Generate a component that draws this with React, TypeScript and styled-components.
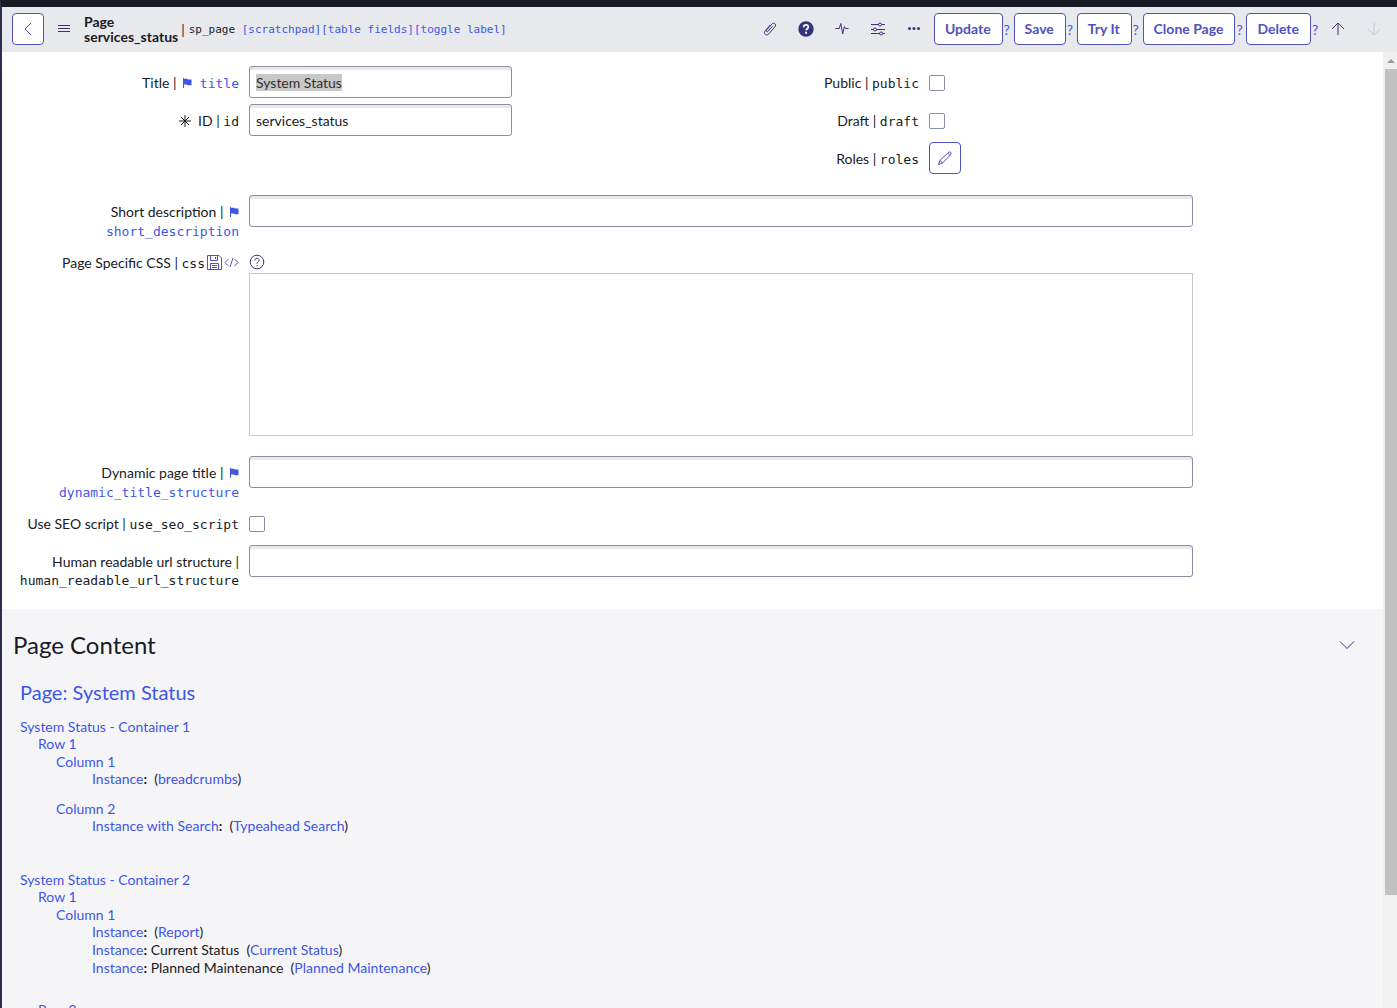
import React, { useEffect, useRef } from "react";
import styled, { createGlobalStyle, css } from "styled-components";

const color = {
  text: "#181a1f",
  link: "#3d56e8",
  action: "#4f52bd",
  icon: "#33357c",
  border: "#8b8fa3",
};

const Global = createGlobalStyle`
  *, *::before, *::after { box-sizing: border-box; }
  body {
    margin: 0;
    overflow: hidden;
    background: #fff;
    color: ${color.text};
    font: 14px/19px Lato, "Open Sans", sans-serif;
  }
  button, input, textarea { font: inherit; color: inherit; }
  a { color: ${color.link}; text-decoration: none; }
`;

const mono = css`
  font-family: "DejaVu Sans Mono", "Liberation Mono", monospace;
`;

const Shell = styled.div`
  display: flex;
  flex-direction: column;
  height: 100vh;
  border-top: 7px solid #1a1926;
  border-left: 2px solid #2f2d4c;
`;

const Header = styled.header`
  display: flex;
  flex: none;
  align-items: center;
  justify-content: space-between;
  height: 45px;
  padding: 0 3px 1px 10px;
  background: #e8e9ed;
`;

const HeaderGroup = styled.div`
  display: flex;
  align-items: center;
  white-space: nowrap;
`;

const HeaderTools = styled(HeaderGroup)`
  margin-right: 2px;
`;

const SquareButton = styled.button`
  display: grid;
  place-items: center;
  width: 32px;
  height: 32px;
  padding: 0;
  border: 1px solid ${color.action};
  border-radius: 4px;
  background: #fff;
  color: ${color.action};
`;

const IconButton = styled.button<{ $width?: number }>`
  display: grid;
  place-items: center;
  width: ${(p) => p.$width ?? 36}px;
  height: 32px;
  padding: 0;
  border: 0;
  background: none;
  color: ${color.icon};
  &:disabled { color: #c6c7da; }
`;

const Title = styled.h1`
  margin: 0;
  font-size: 14px;
  line-height: 15px;
  font-weight: 700;
`;

const HeaderMeta = styled.div`
  display: flex;
  align-items: center;
  gap: 4px;
  margin-left: 3px;
`;

const HeaderCode = styled.span`
  ${mono}
  font-size: 11px;
  white-space: pre;
`;

const ActionButton = styled.button`
  height: 32px;
  padding: 0 11px 1px 10px;
  border: 1px solid ${color.action};
  border-radius: 4px;
  background: #fff;
  color: ${color.action};
  font-weight: 700;
`;

const HelpLink = styled.a`
  width: 11px;
  padding-left: 1px;
`;

const Body = styled.div`
  display: flex;
  flex: 1;
  min-height: 0;
`;

const Main = styled.main`
  flex: 1;
  min-width: 0;
  overflow: hidden;
`;

const Scrollbar = styled.div`
  display: grid;
  flex: none;
  grid-template-rows: 17px 88fr 12fr;
  width: 14px;
  padding-left: 2px;
  background: #f0f0f1;
`;

const ScrollArrow = styled.div`
  display: grid;
  place-items: center;
`;

const ScrollThumb = styled.div`
  background: #c1c1c1;
`;

const Form = styled.form`
  padding: 14px 21px 20px 0;
`;

const Columns = styled.div`
  display: grid;
  grid-template-columns: 1fr 1fr;
`;

const Column = styled.div`
  display: flex;
  flex-direction: column;
  gap: 6px;
`;

const Field = styled.div<{ $top?: number; $wide?: boolean }>`
  display: grid;
  grid-template-columns: 237px 1fr;
  column-gap: 10px;
  align-items: start;
  margin-top: ${(p) => p.$top ?? 0}px;
  padding-right: ${(p) => (p.$wide ? "169px" : "0")};
`;

const Label = styled.label<{ $flush?: boolean; $tight?: boolean }>`
  padding-top: ${(p) => (p.$flush ? 0 : p.$tight ? 8 : 7)}px;
  line-height: ${(p) => (p.$tight ? 18 : 19)}px;
  text-align: right;
`;

const Code = styled.span`
  ${mono}
  font-size: 13px;
  line-height: 1;
`;

const CodeLink = styled.a`
  ${mono}
  font-size: 13px;
  line-height: 1;
`;

const TextBox = styled.input<{ $short?: boolean }>`
  width: ${(p) => (p.$short ? "263px" : "100%")};
  height: 32px;
  padding: 0 6px;
  border: 1px solid ${color.border};
  border-radius: 3px;
  outline: 0;
  background: #fff;
  box-shadow: inset 0 3px 0 #e6e8ea;
  &::selection { background: #c8c8c8; color: #2e2e2e; }
`;

const CheckCell = styled.div`
  display: flex;
  align-items: center;
  height: 32px;
  padding-top: 2px;
`;

const CheckBox = styled.input`
  appearance: none;
  width: 16px;
  height: 16px;
  margin: 0;
  border: 1px solid ${color.border};
  border-radius: 2px;
  background: #fff;
  &:checked { background: ${color.action}; }
`;

const InlineButton = styled.button`
  display: inline-block;
  height: 16px;
  margin: 0 0 0 2px;
  padding: 0;
  border: 0;
  background: none;
  color: ${color.action};
  line-height: 0;
  vertical-align: -2px;
`;

const EditorCell = styled.div`
  display: flex;
  flex-direction: column;
  align-items: stretch;
`;

const EditorTools = styled.div`
  display: flex;
  height: 20px;
  padding-top: 1px;
`;

const HintButton = styled.button`
  width: 16px;
  height: 16px;
  padding: 0;
  border: 0;
  background: none;
  color: ${color.icon};
  line-height: 0;
`;

const Editor = styled.textarea`
  display: block;
  width: 100%;
  height: 163px;
  border: 1px solid #c6c7cb;
  border-radius: 0;
  resize: none;
`;

const FlagIcon = styled.svg`
  margin: 0 0 0 2px;
`;

const MandatoryIcon = styled.svg`
  margin-right: 3px;
  vertical-align: -2px;
`;

const Section = styled.section`
  min-height: 100%;
  padding: 20px 20px 0 11px;
  background: #f5f5f8;
`;

const SectionHeader = styled.div`
  display: flex;
  align-items: center;
  justify-content: space-between;
`;

const SectionTitle = styled.h2`
  margin: 0;
  font-size: 24px;
  line-height: 30px;
  font-weight: 400;
`;

const Tree = styled.div`
  padding: 19px 0 0 7px;
`;

const TreeTitle = styled.h3`
  margin: 0 0 14px;
  font-size: 20px;
  line-height: 24px;
  font-weight: 400;
`;

const TreeList = styled.ul<{ $indent?: number }>`
  margin: 0;
  padding: 0 0 0 ${(p) => p.$indent ?? 0}px;
  list-style: none;
`;

const Branch = styled.li<{ $line: number }>`
  padding-bottom: 12px;
  line-height: ${(p) => p.$line}px;
`;

const Leaf = styled.li`
  line-height: 18px;
`;

type Instance = { link: string; name?: string; widget: string };
type TreeColumn = { name: string; items: Instance[] };
type TreeRow = { name: string; columns: TreeColumn[] };
type Container = { name: string; rows: TreeRow[] };

const containers: Container[] = [
  {
    name: "System Status - Container 1",
    rows: [
      {
        name: "Row 1",
        columns: [
          { name: "Column 1", items: [{ link: "Instance", widget: "breadcrumbs" }] },
          { name: "Column 2", items: [{ link: "Instance with Search", widget: "Typeahead Search" }] },
        ],
      },
    ],
  },
  {
    name: "System Status - Container 2",
    rows: [
      {
        name: "Row 1",
        columns: [
          {
            name: "Column 1",
            items: [
              { link: "Instance", widget: "Report" },
              { link: "Instance", name: "Current Status", widget: "Current Status" },
              { link: "Instance", name: "Planned Maintenance", widget: "Planned Maintenance" },
            ],
          },
        ],
      },
      { name: "Row 2", columns: [] },
    ],
  },
];

const actions = ["Update", "Save", "Try It", "Clone Page", "Delete"];

const stroke = { fill: "none", stroke: "currentColor", strokeWidth: 1 };

const Flag = () => (
  <FlagIcon width="10" height="10" viewBox="0 0 10 10" fill={color.link} aria-hidden="true">
    <path d="M1 0h1v.8h3l1 .7h3.500v5.700H6l-1-.7H2V10H1z" />
  </FlagIcon>
);

const Mandatory = () => (
  <MandatoryIcon width="14" height="14" viewBox="0 0 14 14" {...stroke} aria-hidden="true">
    <path d="M7 1v12M1 7h12M3 3l8 8M11 3l-8 8" />
  </MandatoryIcon>
);

const Paperclip = () => (
  <svg width="16" height="16" viewBox="0 0 16 16" {...stroke}>
    <path d="M10.500 5.200l-4.600 5.300c-.9 1-2.300-.2-1.500-1.200l5.500-6.300c1.900-2.100 5 .4 3.100 2.700l-6.200 7.200c-2.400 2.700-5.900-.4-3.700-3l5-5.800" />
  </svg>
);

const HelpSolid = () => (
  <svg width="16" height="16" viewBox="0 0 16 16">
    <circle cx="8" cy="8" r="7.700" fill="currentColor" />
    <path d="M5.700 6.200c0-3 4.700-3 4.700-.2 0 1.700-2.300 1.700-2.300 3.300" fill="none" stroke="#fff" strokeWidth="1.800" />
    <rect x="7.100" y="10.700" width="2" height="2" fill="#fff" />
  </svg>
);

const Pulse = () => (
  <svg width="16" height="16" viewBox="0 0 16 16" {...stroke}>
    <path d="M1.500 7.500h3.700L6.800 2.500l1.900 10.500 1.700-7.500 1 2h3.100" />
  </svg>
);

const Sliders = () => (
  <svg width="16" height="16" viewBox="0 0 16 16" {...stroke}>
    <path d="M1 3.500h7.500M11.500 3.500H15M1 8.500h2.500M6.500 8.500H15M1 12.500h8.500M12.500 12.500H15" />
    <circle cx="10" cy="3.500" r="1.500" />
    <circle cx="5" cy="8.500" r="1.500" />
    <circle cx="11" cy="12.500" r="1.500" />
  </svg>
);

const Dots = () => (
  <svg width="16" height="16" viewBox="0 0 16 16" fill="currentColor">
    <circle cx="3.500" cy="7.500" r="1.500" />
    <circle cx="8" cy="7.500" r="1.500" />
    <circle cx="12.500" cy="7.500" r="1.500" />
  </svg>
);

const Arrow = ({ down }: { down?: boolean }) => (
  <svg width="16" height="16" viewBox="0 0 16 16" {...stroke}>
    {down ? <path d="M8 1.500v12M2 8l6 6 6-6" /> : <path d="M8 14V2M2 8l6-6 6 6" />}
  </svg>
);

const Pencil = () => (
  <svg width="16" height="16" viewBox="0 0 16 16" {...stroke}>
    <path d="M1.500 14.500l1.500-4.200 8.700-8c1.500-1.100 3.200.7 2.100 2.100l-8.200 8.600zM3 10.300l2.600 2.700M10.800 3.200l2.200 2.200" />
  </svg>
);

function Leaves({ items }: { items: Instance[] }) {
  return (
    <TreeList $indent={36}>
      {items.map((item) => (
        <Leaf key={item.widget}>
          <a href="#instance">{item.link}</a>
          <b>:</b> {item.name}
          {item.name ? "\u00a0 " : "\u00a0"}(<a href="#widget">{item.widget}</a>)
        </Leaf>
      ))}
    </TreeList>
  );
}

function PageTree() {
  return (
    <Tree>
      <TreeTitle>
        <a href="#page">Page: System Status</a>
      </TreeTitle>
      <TreeList>
        {containers.map((container) => (
          <Branch key={container.name} $line={17}>
            <a href="#container">{container.name}</a>
            <TreeList $indent={18}>
              {container.rows.map((row) => (
                <Branch key={row.name} $line={18}>
                  <a href="#row">{row.name}</a>
                  <TreeList $indent={18}>
                    {row.columns.map((column) => (
                      <Branch key={column.name} $line={17}>
                        <a href="#column">{column.name}</a>
                        <Leaves items={column.items} />
                      </Branch>
                    ))}
                  </TreeList>
                </Branch>
              ))}
            </TreeList>
          </Branch>
        ))}
      </TreeList>
    </Tree>
  );
}

export default function App() {
  const titleRef = useRef<HTMLInputElement>(null);

  useEffect(() => {
    titleRef.current?.focus();
    titleRef.current?.select();
  }, []);

  return (
    <>
      <Global />
      <Shell>
        <Header>
          <HeaderGroup>
            <SquareButton aria-label="Back">
              <svg width="16" height="16" viewBox="0 0 16 16" {...stroke}>
                <path d="M11 2L5 8l6 6" />
              </svg>
            </SquareButton>
            <IconButton $width={40} aria-label="Menu">
              <svg width="16" height="16" viewBox="0 0 16 16" {...stroke}>
                <path d="M2 4.500h12M2 7.500h12M2 10.500h12" />
              </svg>
            </IconButton>
            <Title>
              Page
              <br />
              services_status
            </Title>
            <HeaderMeta>
              <span>|</span>
              <HeaderCode>
                sp_page <a href="#scratchpad">[scratchpad]</a>
                <a href="#fields">[table fields]</a>
                <a href="#toggle">[toggle label]</a>
              </HeaderCode>
            </HeaderMeta>
          </HeaderGroup>
          <HeaderGroup>
            <HeaderTools>
              <IconButton aria-label="Attachments"><Paperclip /></IconButton>
              <IconButton aria-label="Help"><HelpSolid /></IconButton>
              <IconButton aria-label="Activity"><Pulse /></IconButton>
              <IconButton aria-label="Personalize"><Sliders /></IconButton>
              <IconButton aria-label="More"><Dots /></IconButton>
            </HeaderTools>
            {actions.map((name) => (
              <React.Fragment key={name}>
                <ActionButton type="button">{name}</ActionButton>
                <HelpLink href="#help">?</HelpLink>
              </React.Fragment>
            ))}
            <IconButton $width={32} aria-label="Previous record"><Arrow /></IconButton>
            <IconButton $width={40} aria-label="Next record" disabled><Arrow down /></IconButton>
          </HeaderGroup>
        </Header>
        <Body>
          <Main>
            <Form onSubmit={(e) => e.preventDefault()}>
              <Columns>
                <Column>
                  <Field>
                    <Label htmlFor="title">
                      Title | <Flag />
                      <Code> </Code>
                      <CodeLink href="#title">title</CodeLink>
                    </Label>
                    <TextBox $short id="title" ref={titleRef} defaultValue="System Status" />
                  </Field>
                  <Field>
                    <Label htmlFor="id">
                      <Mandatory /> ID | <Code>id</Code>
                    </Label>
                    <TextBox $short id="id" defaultValue="services_status" />
                  </Field>
                </Column>
                <Column>
                  <Field>
                    <Label htmlFor="public">
                      Public | <Code>public</Code>
                    </Label>
                    <CheckCell><CheckBox type="checkbox" id="public" /></CheckCell>
                  </Field>
                  <Field>
                    <Label htmlFor="draft">
                      Draft | <Code>draft</Code>
                    </Label>
                    <CheckCell><CheckBox type="checkbox" id="draft" /></CheckCell>
                  </Field>
                  <Field>
                    <Label htmlFor="roles">
                      Roles | <Code>roles</Code>
                    </Label>
                    <SquareButton type="button" id="roles"><Pencil /></SquareButton>
                  </Field>
                </Column>
              </Columns>
              <Field $wide $top={21}>
                <Label htmlFor="short">
                  Short description | <Flag />
                  <br />
                  <CodeLink href="#short">short_description</CodeLink>
                </Label>
                <TextBox id="short" />
              </Field>
              <Field $wide $top={13}>
                <Label htmlFor="css" $flush>
                  Page Specific CSS | <Code>css</Code>
                  <InlineButton type="button" aria-label="Save CSS">
                    <svg width="15" height="15" viewBox="0 0 15 15" {...stroke}>
                      <path d="M.5.500h11.500l2.500 2.500v11.500H.5zM3.500.500v5h7v-5M8.500 2v2M3.500 14.500v-6h8v6M5 10.500h5M5 12.500h5" />
                    </svg>
                  </InlineButton>
                  <InlineButton type="button" aria-label="Format code">
                    <svg width="15" height="15" viewBox="0 0 15 15" {...stroke}>
                      <path d="M4.500 4L1 7.500 4.500 11M10.500 4L14 7.500 10.500 11M9 3L6 12" />
                    </svg>
                  </InlineButton>
                </Label>
                <EditorCell>
                  <EditorTools>
                    <HintButton type="button" aria-label="Editor help">
                      <svg width="16" height="16" viewBox="0 0 16 16" {...stroke}>
                        <circle cx="8" cy="8" r="6.800" />
                        <path d="M5.800 6.500c0-3 4.400-2.800 4.400-.3C10.200 7.800 8 7.800 8 9.800M8 11v1.200" />
                      </svg>
                    </HintButton>
                  </EditorTools>
                  <Editor id="css" />
                </EditorCell>
              </Field>
              <Field $wide $top={20}>
                <Label htmlFor="dynamic">
                  Dynamic page title | <Flag />
                  <br />
                  <CodeLink href="#dynamic">dynamic_title_structure</CodeLink>
                </Label>
                <TextBox id="dynamic" />
              </Field>
              <Field $wide $top={6}>
                <Label htmlFor="seo">
                  Use SEO script | <Code>use_seo_script</Code>
                </Label>
                <CheckCell><CheckBox type="checkbox" id="seo" /></CheckCell>
              </Field>
              <Field $wide $top={6}>
                <Label htmlFor="human" $tight>
                  Human readable url structure |<br />
                  <Code>human_readable_url_structure</Code>
                </Label>
                <TextBox id="human" />
              </Field>
            </Form>
            <Section>
              <SectionHeader>
                <SectionTitle>Page Content</SectionTitle>
                <IconButton $width={32} aria-label="Collapse section">
                  <svg width="16" height="16" viewBox="0 0 16 16" {...stroke}>
                    <path d="M1 4.500l7 7 7-7" />
                  </svg>
                </IconButton>
              </SectionHeader>
              <PageTree />
            </Section>
          </Main>
          <Scrollbar aria-hidden="true">
            <ScrollArrow>
              <svg width="8" height="4" viewBox="0 0 8 4" fill="#9a9a9a">
                <path d="M0 4l4-4 4 4z" />
              </svg>
            </ScrollArrow>
            <ScrollThumb />
          </Scrollbar>
        </Body>
      </Shell>
    </>
  );
}
